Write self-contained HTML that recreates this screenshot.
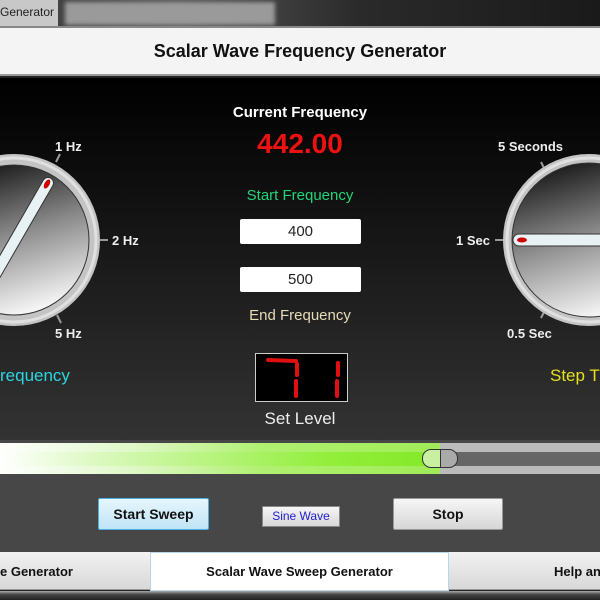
<!DOCTYPE html>
<html><head><meta charset="utf-8"><style>
*{margin:0;padding:0;box-sizing:border-box}
body{width:600px;height:600px;overflow:hidden;font-family:"Liberation Sans",sans-serif;background:#222;position:relative}
.abs{position:absolute}
.t{position:absolute;white-space:nowrap}
</style></head><body>
<div class="abs" style="left:0;top:0;width:600px;height:27px;background:linear-gradient(90deg,#3a3a3a,#555 30%,#2a2a2a 60%,#1a1a1a)"></div>
<div class="abs" style="left:0;top:0;width:58px;height:26px;background:#c8c8c8"></div>
<div class="t" style="left:0;top:5px;font-size:12px;color:#222">Generator</div>
<div class="abs" style="left:65px;top:2px;width:210px;height:23px;background:#9a9a9a;filter:blur(2px)"></div>
<div class="abs" style="left:0;top:26px;width:600px;height:2px;background:#888"></div>
<div class="abs" style="left:0;top:28px;width:600px;height:48px;background:#f4f4f4;border-bottom:2px solid #999"></div>
<div class="t" style="left:0;width:600px;text-align:center;top:41px;font-size:18px;font-weight:bold;color:#111">Scalar Wave Frequency Generator</div>
<div class="abs" style="left:0;top:78px;width:600px;height:362px;background:linear-gradient(#000,#141414 40%,#333)"></div>
<div class="abs" style="left:0;top:440px;width:600px;height:112px;background:#474747"></div>

<svg class="abs" style="left:0;top:0" width="600" height="440">
<defs>
<linearGradient id="face" x1="0.2" y1="0" x2="0.5" y2="1"><stop offset="0" stop-color="#111"/><stop offset="0.5" stop-color="#8a8a8a"/><stop offset="1" stop-color="#f4f4f4"/></linearGradient>
</defs>
<g stroke="#999" stroke-width="2"><line x1="56" y1="162" x2="60" y2="154"/><line x1="100" y1="240" x2="108" y2="240"/><line x1="57" y1="315" x2="61" y2="323"/></g>
<circle cx="14" cy="240" r="86" fill="#c4c4c4"/>
<circle cx="14" cy="240" r="82" fill="none" stroke="#e0e0e0" stroke-width="3"/>
<circle cx="14" cy="240" r="75" fill="url(#face)" stroke="#333" stroke-width="1"/>
<line x1="48" y1="183" x2="-5" y2="275" stroke="#333" stroke-width="12" stroke-linecap="round"/>
<line x1="48" y1="183" x2="-5" y2="275" stroke="#e8f2f4" stroke-width="10" stroke-linecap="round"/>
<ellipse cx="47" cy="184" rx="2.5" ry="5" transform="rotate(30 47 184)" fill="#c00"/>
<g stroke="#999" stroke-width="2"><line x1="541" y1="162" x2="545" y2="170"/><line x1="495" y1="240" x2="503" y2="240"/><line x1="541" y1="318" x2="545" y2="310"/></g>
<circle cx="589" cy="240" r="86" fill="#c4c4c4"/>
<circle cx="589" cy="240" r="82" fill="none" stroke="#e0e0e0" stroke-width="3"/>
<circle cx="589" cy="240" r="77" fill="url(#face)" stroke="#333" stroke-width="1"/>
<line x1="519" y1="240" x2="620" y2="240" stroke="#333" stroke-width="13" stroke-linecap="round"/>
<line x1="519" y1="240" x2="620" y2="240" stroke="#e8f2f4" stroke-width="11" stroke-linecap="round"/>
<ellipse cx="522" cy="240" rx="5" ry="2.5" fill="#c00"/>
</svg>

<div class="t" style="left:55px;top:139px;font-size:13px;font-weight:bold;color:#eee">1 Hz</div>
<div class="t" style="left:112px;top:233px;font-size:13px;font-weight:bold;color:#eee">2 Hz</div>
<div class="t" style="left:55px;top:326px;font-size:13px;font-weight:bold;color:#eee">5 Hz</div>
<div class="t" style="left:498px;top:139px;font-size:13px;font-weight:bold;color:#eee">5 Seconds</div>
<div class="t" style="left:456px;top:233px;font-size:13px;font-weight:bold;color:#eee">1 Sec</div>
<div class="t" style="left:507px;top:326px;font-size:13px;font-weight:bold;color:#eee">0.5 Sec</div>
<div class="t" style="left:0;top:366px;font-size:17px;color:#2cd6e0">requency</div>
<div class="t" style="left:550px;top:366px;font-size:17px;color:#e6e01e">Step T</div>

<div class="t" style="left:0;width:600px;text-align:center;top:104px;font-size:15px;font-weight:bold;color:#fff">Current Frequency</div>
<div class="t" style="left:0;width:600px;text-align:center;top:128px;font-size:28px;font-weight:bold;color:#ee1111">442.00</div>
<div class="t" style="left:0;width:600px;text-align:center;top:187px;font-size:15px;color:#22d47a">Start Frequency</div>
<div class="abs" style="left:240px;top:219px;width:121px;height:25px;background:#fff;border-radius:2px;font-size:15px;text-align:center;line-height:25px;color:#222">400</div>
<div class="abs" style="left:240px;top:267px;width:121px;height:25px;background:#fff;border-radius:2px;font-size:15px;text-align:center;line-height:25px;color:#222">500</div>
<div class="t" style="left:0;width:600px;text-align:center;top:307px;font-size:15px;color:#e6dcb8">End Frequency</div>
<div class="abs" style="left:255px;top:353px;width:93px;height:49px;background:#000;border:1px solid #ccc"></div>
<svg class="abs" style="left:255px;top:353px" width="93" height="49">
<g stroke="#e01010" stroke-width="4" stroke-linecap="round" fill="none">
<line x1="13" y1="7" x2="41" y2="8"/><line x1="42" y1="11" x2="42" y2="22"/><line x1="41" y1="28" x2="41" y2="43"/>
<line x1="83" y1="10" x2="83" y2="22"/><line x1="82" y1="28" x2="82" y2="43"/>
</g></svg>
<div class="t" style="left:0;width:600px;text-align:center;top:409px;font-size:17px;color:#eee">Set Level</div>

<div class="abs" style="left:0;top:443px;width:600px;height:31px;background:#bbb"></div>
<div class="abs" style="left:0;top:443px;width:440px;height:31px;background:linear-gradient(90deg,#fff,#dff8c8 30%,#b0f070 60%,#a0ec58)"></div>
<div class="abs" style="left:0;top:452px;width:440px;height:14px;background:linear-gradient(90deg,#fff,#d8f8b8 25%,#92ee3a 75%,#84e828)"></div>
<div class="abs" style="left:440px;top:452px;width:160px;height:14px;background:#666"></div>
<div class="abs" style="left:422px;top:449px;width:36px;height:19px;border:1.5px solid #333;border-radius:9px;background:linear-gradient(90deg,#c8f0a0 50%,#aaa 50%)"></div>
<div class="abs" style="left:440px;top:449px;width:1px;height:19px;background:#333"></div>

<div class="abs" style="left:98px;top:498px;width:111px;height:32px;border:1px solid #4ab0e0;border-radius:2px;background:linear-gradient(#e6f6fd,#bfe4f6);font-size:14px;font-weight:bold;text-align:center;line-height:30px;color:#111">Start Sweep</div>
<div class="abs" style="left:262px;top:506px;width:78px;height:21px;border:1px solid #888;background:linear-gradient(#f6f6f6,#d8d8d8);font-size:12px;text-align:center;line-height:19px;color:#2222cc">Sine Wave</div>
<div class="abs" style="left:393px;top:498px;width:110px;height:32px;border:1px solid #999;border-radius:2px;background:linear-gradient(#f6f6f6,#d6d6d6);font-size:14px;font-weight:bold;text-align:center;line-height:30px;color:#111">Stop</div>

<div class="abs" style="left:0;top:552px;width:600px;height:38px;background:linear-gradient(#f2f2f2,#d8d8d8);border-bottom:1px solid #999"></div>
<div class="abs" style="left:150px;top:552px;width:299px;height:39px;background:#fff;border:1px solid #b8d8ea"></div>
<div class="t" style="left:0;top:564px;font-size:13px;font-weight:bold;color:#111">e Generator</div>
<div class="t" style="left:150px;width:299px;text-align:center;top:564px;font-size:13px;font-weight:bold;color:#111">Scalar Wave Sweep Generator</div>
<div class="t" style="left:554px;top:564px;font-size:13px;font-weight:bold;color:#111">Help an</div>
<div class="abs" style="left:0;top:591px;width:600px;height:9px;background:linear-gradient(#aaa,#444 40%,#222)"></div>
</body></html>
